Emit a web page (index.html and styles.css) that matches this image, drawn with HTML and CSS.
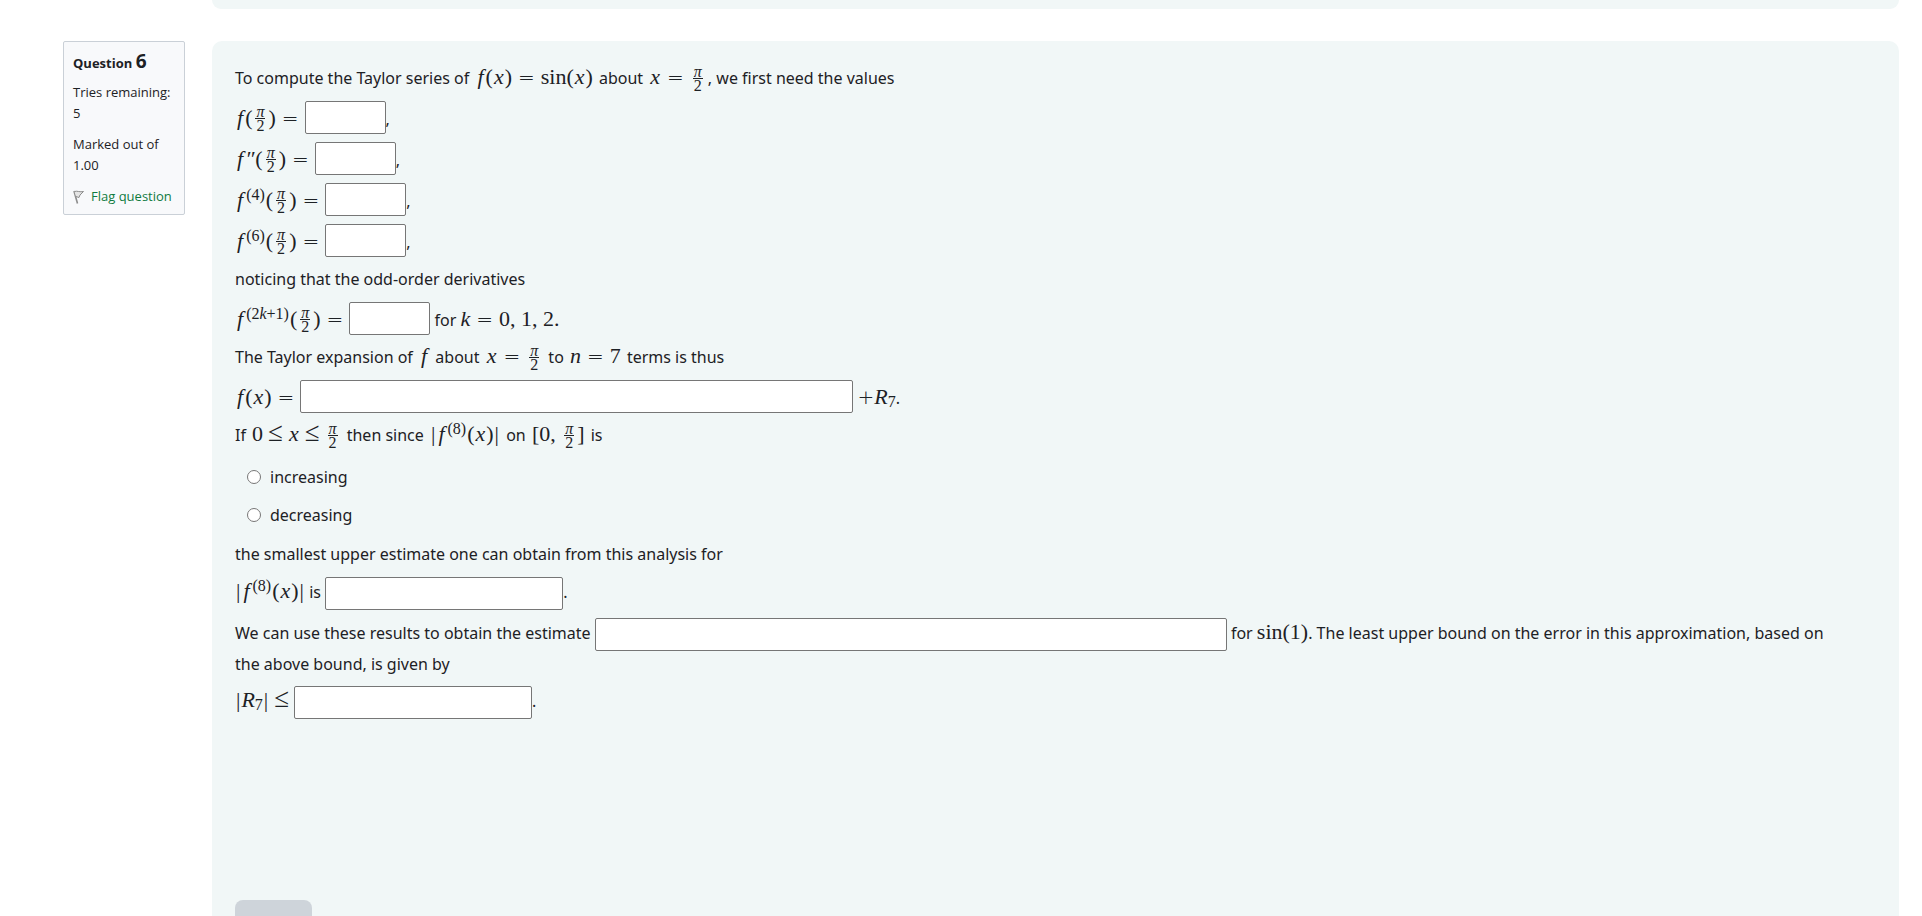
FILE: index.html
```html
<!DOCTYPE html>
<html lang="en">
<head>
    <meta charset="UTF-8">
    <meta name="viewport" content="width=device-width, initial-scale=1.0">
    <title>Question 6</title>
    <link rel="stylesheet" href="styles.css">
</head>
<body>

  <div class="previous"></div>

  <div class="question">
    <aside class="info">
      <h3>Question <span class="number">6</span></h3>
      <div class="state">Tries remaining: 5</div>
      <div class="grade">Marked out of 1.00</div>
      <a class="flag" href="#">
        <svg width="12" height="14" viewBox="0 0 12 14" fill="none" stroke="#8c8c8c">
          <path d="M1 1l3.500 12.500" stroke-width="1.600"/>
          <path d="M1.500 1.500C4 .500 7 2.500 10.500 1.500L7 5l-1 2.500-3-1" fill="#e4e4e4"/>
        </svg>
        <span>Flag question</span>
      </a>
    </aside>

    <main class="formulation">
      <p class="text">To compute the Taylor series of <span class="math"><i class="f">f</i>(<i class="x">x</i>)<b class="rel">=</b>sin(<i class="x">x</i>)</span> about <span class="math"><i class="x">x</i><b class="rel">=</b><span class="frac"><i>π</i><span>2</span></span></span>, we first need the values</p>
      <p><label for="a0" class="math"><i class="f">f</i>(<span class="frac"><i>π</i><span>2</span></span>)<b class="rel">=</b></label><input type="text" id="a0" class="short">,</p>
      <p><label for="a2" class="math"><i class="f">f</i><i class="prime">″</i>(<span class="frac"><i>π</i><span>2</span></span>)<b class="rel">=</b></label><input type="text" id="a2" class="short">,</p>
      <p><label for="a4" class="math"><i class="f">f</i><sup>(4)</sup>(<span class="frac"><i>π</i><span>2</span></span>)<b class="rel">=</b></label><input type="text" id="a4" class="short">,</p>
      <p><label for="a6" class="math"><i class="f">f</i><sup>(6)</sup>(<span class="frac"><i>π</i><span>2</span></span>)<b class="rel">=</b></label><input type="text" id="a6" class="short">,</p>
      <p class="text">noticing that the odd-order derivatives</p>
      <p><label for="odd" class="math"><i class="f">f</i><sup>(2<i>k</i>+1)</sup>(<span class="frac"><i>π</i><span>2</span></span>)<b class="rel">=</b></label><input type="text" id="odd" class="short"> for <span class="math"><i>k</i><b class="rel">=</b>0, 1, 2.</span></p>
      <p class="text">The Taylor expansion of <span class="math"><i class="f">f</i></span> about <span class="math"><i class="x">x</i><b class="rel">=</b><span class="frac"><i>π</i><span>2</span></span></span> to <span class="math"><i>n</i><b class="rel">=</b>7</span> terms is thus</p>
      <p><label for="expansion" class="math"><i class="f">f</i>(<i class="x">x</i>)<b class="rel">=</b></label><input type="text" id="expansion" class="long"> <span class="math"><b class="op">+</b><i>R</i><sub>7</sub></span>.</p>
      <p class="text">If <span class="math">0<span class="leq">≤</span><i class="x">x</i><span class="leq">≤</span><span class="frac"><i>π</i><span>2</span></span></span> then since <span class="math"><span class="bar">|</span><i class="f">f</i><sup>(8)</sup>(<i class="x">x</i>)<span class="bar">|</span></span> on <span class="math">[0, <span class="frac"><i>π</i><span>2</span></span>]</span> is</p>

      <div class="options">
        <div class="option">
          <input type="radio" name="trend" id="increasing">
          <label for="increasing">increasing</label>
        </div>
        <div class="option">
          <input type="radio" name="trend" id="decreasing">
          <label for="decreasing">decreasing</label>
        </div>
      </div>

      <p class="text">the smallest upper estimate one can obtain from this analysis for</p>
      <p><label for="bound"><span class="math"><span class="bar">|</span><i class="f">f</i><sup>(8)</sup>(<i class="x">x</i>)<span class="bar">|</span></span> is </label><input type="text" id="bound" class="medium">.</p>
      <p><label for="estimate">We can use these results to obtain the estimate </label><input type="text" id="estimate" class="wide"> for <span class="math">sin(1)</span>. The least upper bound on the error in this approximation, based on the above bound, is given by</p>
      <p><label for="error" class="math"><span class="bar">|</span><i>R</i><sub>7</sub><span class="bar">|</span><span class="leq">≤</span></label><input type="text" id="error" class="medium">.</p>

      <button type="button" class="check">Check</button>
    </main>
  </div>

</body>
</html>
```

FILE: styles.css
```css
* {
    box-sizing: border-box;
}
body {
    margin: 0;
    padding: 0 23px 0 63px;
    background: #fff;
    color: #1d2125;
    font-family: "Noto Sans", sans-serif;
    font-size: 16px;
    line-height: 27px;
}
.previous {
    height: 9px;
    margin-left: 149px;
    margin-bottom: 32px;
    background: #f1f7f7;
    border-radius: 0 0 10px 10px;
}
.question {
    display: flex;
    align-items: flex-start;
    gap: 27px;
}

/* left info box */
.info {
    flex: 0 0 122px;
    padding: 8px 9px 7px;
    background: #f8f9fb;
    border: 1px solid #cad0d7;
    border-radius: 2px;
    font-family: "Open Sans", sans-serif;
    font-size: 13px;
    line-height: 21px;
}
.info h3 {
    margin: 0;
    font-size: 13px;
    line-height: 22px;
}
.info .number {
    font-size: 19px;
}
.state {
    margin-top: 8px;
}
.grade {
    margin-top: 10px;
}
.flag {
    display: flex;
    align-items: center;
    gap: 6px;
    margin-top: 10px;
    color: #0f7b3f;
    text-decoration: none;
    white-space: nowrap;
}

/* question body */
.formulation {
    flex: 1;
    min-width: 0;
    min-height: 920px;
    padding: 19px 23px 24px;
    background: #f1f7f7;
    border-radius: 10px;
}
.formulation p {
    margin: 0;
    padding: 4px 24px 4px 0;
}
.formulation .text {
    padding: 5px 0;
}
.formulation input[type="text"] {
    height: 33px;
    padding: 1px 6px;
    background: #fff;
    border: 1px solid #767676;
    border-radius: 2px;
    font: inherit;
    vertical-align: middle;
}
.formulation .short {
    width: 81px;
}
.formulation .medium {
    width: 238px;
}
.formulation .long {
    width: 553px;
}
.formulation input.short,
.formulation input.long {
    vertical-align: 1px;
}
.formulation .wide {
    width: 632px;
}

/* maths */
.math {
    font-family: "Liberation Serif", serif;
    font-size: 22px;
    line-height: 24px;
    white-space: nowrap;
}
.text span.math {
    margin: 0 2px;
}
.math .rel,
.math .op {
    font-family: "DejaVu Sans", sans-serif;
    font-size: 20px;
    font-weight: 200;
    line-height: 0;
}
.math .rel {
    margin: 0 6px;
}
.math .leq {
    margin: 0 5px;
    font-size: 27px;
    line-height: 0;
}
.math .f {
    margin: 0 2px;
}
.math .x {
    margin: 0 1px;
}
.math .prime {
    margin-right: 1px;
    line-height: 0;
}
.math sup,
.math sub {
    font-size: 16px;
    line-height: 0;
}
.math sup {
    margin: 0 1px;
    vertical-align: 7px;
}
.math sub {
    vertical-align: -3px;
}
.math .bar {
    margin: 0 1px;
}
.frac {
    display: inline-flex;
    flex-direction: column;
    align-items: center;
    margin: 0 3px;
    font-size: 16px;
    line-height: 12px;
    vertical-align: middle;
}
.frac i {
    padding: 0 1px;
    border-bottom: 1px solid #1d2125;
}
.frac span {
    padding-top: 1px;
}

.options {
    padding: 4px 0 2px 12px;
}
.option {
    display: flex;
    align-items: center;
    gap: 9px;
    height: 38px;
}
.option input {
    width: 14px;
    height: 14px;
    margin: 0;
}

.check {
    display: block;
    height: 46px;
    margin-top: 177px;
    padding: 0 16px;
    background: #ced4da;
    border: 0;
    border-radius: 8px;
    color: #1d2125;
    font: inherit;
}
```
